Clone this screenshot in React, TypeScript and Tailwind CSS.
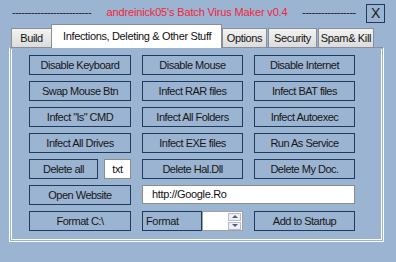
const rows: string[][] = [
  ['Disable Keyboard', 'Disable Mouse', 'Disable Internet'],
  ['Swap Mouse Btn', 'Infect RAR files', 'Infect BAT files'],
  ['Infect "ls" CMD', 'Infect All Folders', 'Infect Autoexec'],
  ['Infect All Drives', 'Infect EXE files', 'Run As Service'],
]

function Btn({ label, className = '' }: { label: string; className?: string }) {
  return (
    <div
      className={`h-[20px] shrink-0 border border-[#1e3a5c] flex items-center justify-center text-[#161616] whitespace-nowrap tracking-[-0.5px] ${className}`}
    >
      {label}
    </div>
  )
}

function Tab({ label, className = '' }: { label: string; className?: string }) {
  return (
    <div
      className={`h-[19px] shrink-0 border border-b-0 border-[#8a8e96] bg-gradient-to-b from-[#f3f3f3] to-[#dcdcdc] flex items-center justify-center text-[#111] whitespace-nowrap ${className}`}
    >
      {label}
    </div>
  )
}

export default function App() {
  return (
    <div className="w-[396px] h-[262px] bg-[#9bb4d2] font-['Liberation_Sans',Arial,sans-serif] text-[11px] tracking-[-0.35px] overflow-hidden">

      {/* Title bar */}
      <div className="flex items-center h-[24px]">
        <div className="ml-[12px] w-[80px] shrink-0 overflow-hidden whitespace-nowrap text-[#222] leading-none tracking-[-0.5px]">
          -------------------------
        </div>
        <div className="ml-[5px] w-[200px] shrink-0 flex justify-center text-[11px] tracking-[-0.15px] text-[#f2243c] whitespace-nowrap">
          andreinick05's Batch Virus Maker v0.4
        </div>
        <div className="ml-[5px] w-[54px] shrink-0 overflow-hidden whitespace-nowrap text-[#222] leading-none tracking-[-0.5px]">
          -----------------
        </div>
        <div className="ml-[10px] mt-[3px] w-[19px] h-[19px] shrink-0 border border-[#1e3a5c] flex items-center justify-center text-[14px] text-[#1a1a1a]">
          X
        </div>
      </div>

      {/* Tabs */}
      <div className="flex items-end h-[23px] ml-[11px] relative z-10">
        <Tab label="Build" className="w-[41px] h-[18px]" />
        <div className="w-[171px] h-[24px] shrink-0 -mb-[1px] -ml-[1px] bg-white border border-b-0 border-[#8a8e96] flex items-center pl-[11px] text-[#111] whitespace-nowrap">
          Infections, Deleting &amp; Other Stuff
        </div>
        <Tab label="Options" className="w-[45px]" />
        <Tab label="Security" className="w-[49px] ml-[1px]" />
        <Tab label="Spam& Kill" className="w-[56px] ml-[1px]" />
      </div>

      {/* Page */}
      <div className="ml-[9px] w-[375px] h-[195px] border border-white border-t-[#8a8e96] p-px">
        <div className="h-full border border-white border-t-0 pt-[6px] pl-[17px]">
          <div className="flex flex-col gap-[6px]">
            {rows.map((r, i) => (
              <div key={i} className="flex gap-[11px]">
                <Btn label={r[0]} className="w-[102px]" />
                <Btn label={r[1]} className="w-[101px]" />
                <Btn label={r[2]} className="w-[101px]" />
              </div>
            ))}

            <div className="flex gap-[11px]">
              <div className="w-[102px] flex gap-[6px]">
                <Btn label="Delete all" className="w-[69px]" />
                <div className="w-[27px] h-[20px] bg-white border border-[#8c8c8c] flex items-center justify-center text-[#111]">
                  txt
                </div>
              </div>
              <Btn label="Delete Hal.Dll" className="w-[101px]" />
              <Btn label="Delete My Doc." className="w-[101px]" />
            </div>

            <div className="flex gap-[11px]">
              <Btn label="Open Website" className="w-[102px]" />
              <div className="w-[213px] h-[19px] bg-white border border-[#8c8c8c] flex items-center pl-[9px] text-[#111]">
                http://Google.Ro
              </div>
            </div>

            <div className="flex gap-[11px]">
              <Btn label="Format C:\" className="w-[102px]" />
              <div className="flex w-[101px]">
                <div className="w-[60px] h-[20px] border border-[#1e3a5c] flex items-center pl-[3px] text-[#161616]">
                  Format
                </div>
                <div className="w-[41px] h-[20px] bg-white border border-[#a0a0a0] flex justify-end items-center pr-[1px]">
                  <div className="w-[13px] h-[17px] flex flex-col gap-px">
                    <div className="flex-1 bg-[#eef0f4] border border-[#b5bcc6] flex items-center justify-center">
                      <div className="w-0 h-0 border-l-[3px] border-r-[3px] border-b-[3px] border-l-transparent border-r-transparent border-b-[#4c5f85]" />
                    </div>
                    <div className="flex-1 bg-[#eef0f4] border border-[#b5bcc6] flex items-center justify-center">
                      <div className="w-0 h-0 border-l-[3px] border-r-[3px] border-t-[3px] border-l-transparent border-r-transparent border-t-[#4c5f85]" />
                    </div>
                  </div>
                </div>
              </div>
              <Btn label="Add to Startup" className="w-[101px]" />
            </div>
          </div>
        </div>
      </div>
    </div>
  )
}
